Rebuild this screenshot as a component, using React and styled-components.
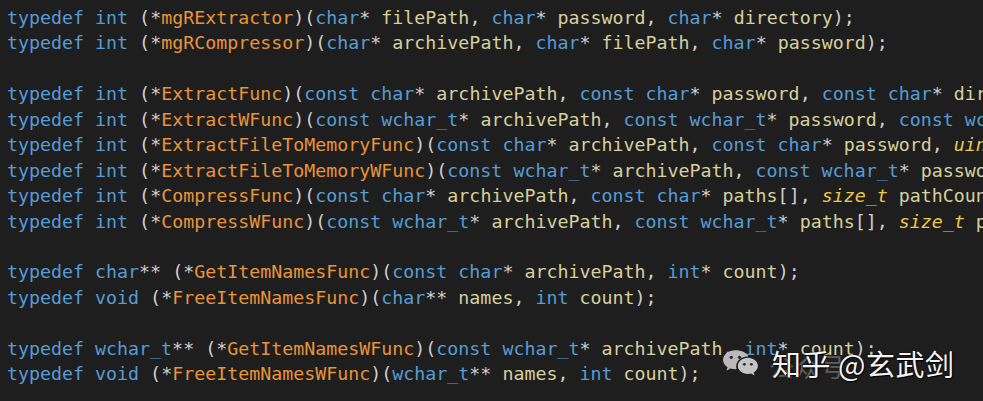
import React from "react";
import styled, { createGlobalStyle } from "styled-components";

const lines = [
  "typedef int (*mgRExtractor)(char* filePath, char* password, char* directory);",
  "typedef int (*mgRCompressor)(char* archivePath, char* filePath, char* password);",
  "",
  "typedef int (*ExtractFunc)(const char* archivePath, const char* password, const char* directory);",
  "typedef int (*ExtractWFunc)(const wchar_t* archivePath, const wchar_t* password, const wchar_t* directory);",
  "typedef int (*ExtractFileToMemoryFunc)(const char* archivePath, const char* password, uint8_t** buffer);",
  "typedef int (*ExtractFileToMemoryWFunc)(const wchar_t* archivePath, const wchar_t* password, uint8_t** buffer);",
  "typedef int (*CompressFunc)(const char* archivePath, const char* paths[], size_t pathCount, const char* password);",
  "typedef int (*CompressWFunc)(const wchar_t* archivePath, const wchar_t* paths[], size_t pathCount);",
  "",
  "typedef char** (*GetItemNamesFunc)(const char* archivePath, int* count);",
  "typedef void (*FreeItemNamesFunc)(char** names, int count);",
  "",
  "typedef wchar_t** (*GetItemNamesWFunc)(const wchar_t* archivePath, int* count);",
  "typedef void (*FreeItemNamesWFunc)(wchar_t** names, int count);",
];

const keywords = ["typedef", "int", "char", "void", "const", "wchar_t"];
const types = ["size_t", "uint8_t"];

// split a line into coloured pieces
const tokenize = (line) => {
  const parts = line.match(/\w+|\s+|[^\w\s]/g) || [];
  const out = [];
  let prev = "";
  let prev2 = "";
  parts.forEach((p) => {
    let kind = "punct";
    if (/^\s+$/.test(p)) kind = "space";
    else if (keywords.includes(p)) kind = "keyword";
    else if (types.includes(p)) kind = "type";
    else if (/^\w+$/.test(p)) kind = prev === "*" && prev2 === "(" ? "func" : "param";
    out.push({ text: p, kind });
    if (kind !== "space") {
      prev2 = prev;
      prev = p;
    }
  });
  return out;
};

const colors = {
  keyword: "#569cd6",
  func: "#e8943a",
  param: "#d6d09c",
  type: "#ecc94b",
  punct: "#cfcfcf",
  space: "inherit",
};

const App = () => {
  return (
    <>
      <GlobalStyle />
      <Editor>
        {lines.map((line, i) => (
          <Line key={i}>
            {tokenize(line).map((t, j) => (
              <Token key={j} $kind={t.kind}>
                {t.text}
              </Token>
            ))}
          </Line>
        ))}
        <Watermark>
          <WeChatIcon viewBox="0 0 36 28">
            <path
              d="M13 1C6.4 1 1 5.2 1 10.4c0 3 1.7 5.6 4.4 7.3L4.3 21l3.9-2.1c1.5.4 3 .6 4.8.6.4 0 .8 0 1.2-.1-.3-.9-.4-1.8-.4-2.7 0-5.3 5-9.5 11.1-9.5h.8C24.4 3.4 19.2 1 13 1z"
              fill="#b9b9b9"
            />
            <circle cx="9" cy="8" r="1.6" fill="#2a2a2a" />
            <circle cx="17" cy="8" r="1.6" fill="#2a2a2a" />
            <path
              d="M35 16.3c0-4.4-4.4-8-9.8-8s-9.8 3.6-9.8 8 4.4 8 9.8 8c1.2 0 2.3-.2 3.3-.5l3.2 1.8-.9-2.8c2.5-1.5 4.2-3.8 4.2-6.5z"
              fill="#c4c4c4"
            />
            <circle cx="21.8" cy="14.8" r="1.4" fill="#2a2a2a" />
            <circle cx="28.6" cy="14.8" r="1.4" fill="#2a2a2a" />
          </WeChatIcon>
          <MarkText>
            <Ghost>公众号</Ghost>
            <Label>知乎 @玄武剑</Label>
          </MarkText>
        </Watermark>
      </Editor>
    </>
  );
};

export default App;

// STYLES
const GlobalStyle = createGlobalStyle`
  html, body {
    margin: 0;
    padding: 0;
    background: #1e1e1e;
    overflow: hidden;
  }
`;

const Editor = styled.div`
  position: relative;
  width: 983px;
  height: 401px;
  overflow: hidden;
  background: #1e1e1e;
  padding: 5px 0 0 7px;
  box-sizing: border-box;
  font-family: "DejaVu Sans Mono", "Liberation Mono", monospace;
  font-size: 18.3px;
`;

const Line = styled.div`
  height: 25.45px;
  line-height: 25.45px;
  white-space: pre;
`;

const Token = styled.span`
  color: ${(p) => colors[p.$kind]};
  font-style: ${(p) => (p.$kind === "type" ? "italic" : "normal")};
`;

const Watermark = styled.div`
  position: absolute;
  left: 722px;
  top: 346px;
  display: flex;
  align-items: center;
  gap: 13px;
`;

const WeChatIcon = styled.svg`
  width: 37px;
  height: 29px;
`;

const MarkText = styled.div`
  position: relative;
  font-family: "Noto Sans CJK SC", "Noto Sans", sans-serif;
  font-size: 29px;
  line-height: 34px;
  letter-spacing: 0.5px;
`;

const Ghost = styled.span`
  position: absolute;
  left: -3px;
  top: 3px;
  color: #5e5e5e;
  font-size: 25px;
  white-space: nowrap;
`;

const Label = styled.span`
  position: relative;
  color: #f4f4f4;
  white-space: nowrap;
  text-shadow: 1px 1px 1px #000, 0 0 2px #000;
`;
